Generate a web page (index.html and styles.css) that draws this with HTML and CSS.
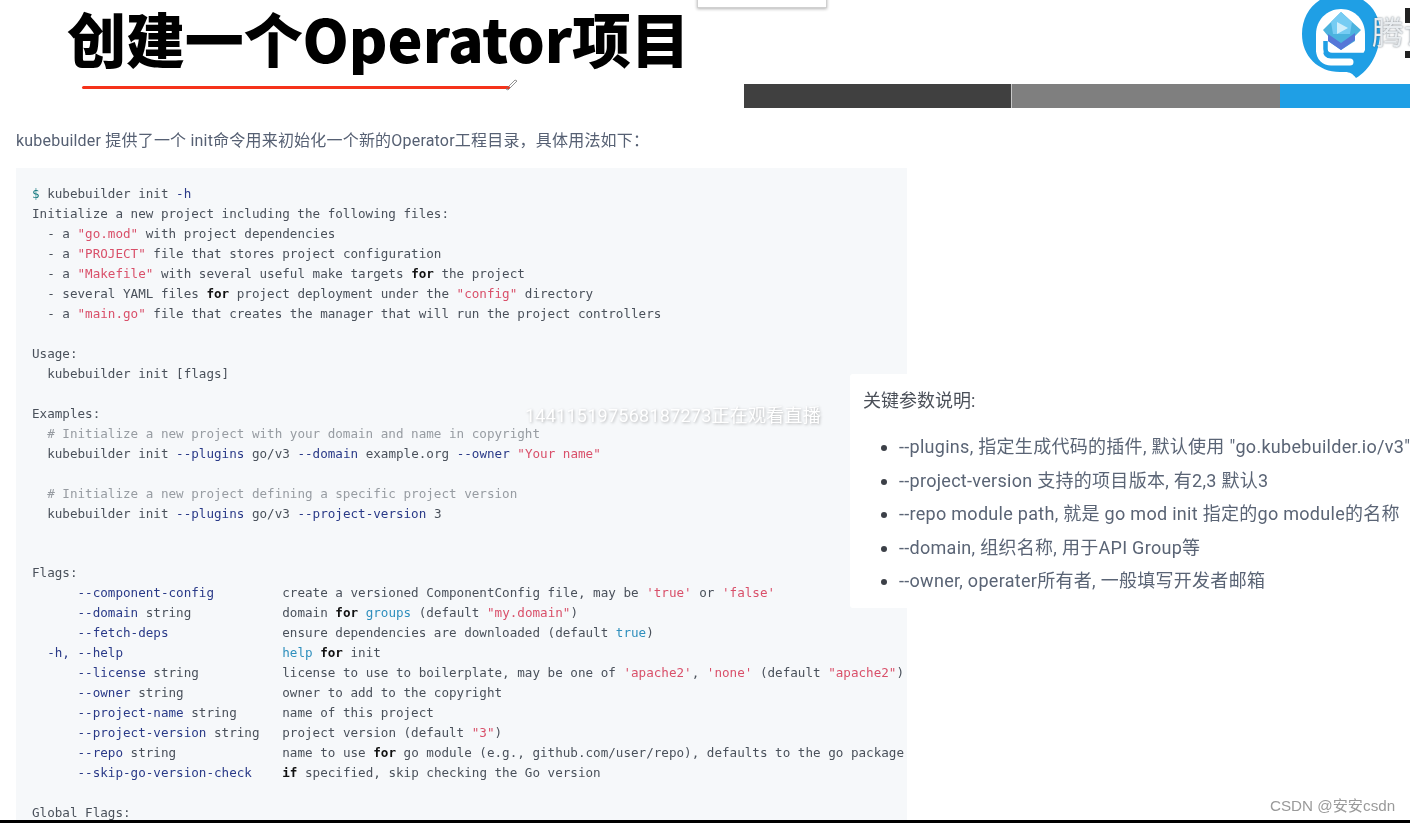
FILE: index.html
```html
<!DOCTYPE html>
<html lang="zh-CN">
<head>
<meta charset="utf-8">
<title>创建一个Operator项目</title>
<link rel="stylesheet" href="styles.css">
</head>
<body>
<div class="stage">
  <header class="slide-head">
    <div class="title-block">
      <h1 class="title">创建一个Operator项目</h1>
      <div class="rule"></div>
    </div>
    <div class="bars">
      <div class="bar bar-dark"></div>
      <div class="bar bar-mid"></div>
      <div class="bar bar-blue"></div>
    </div>
  </header>

  <p class="intro">kubebuilder 提供了一个 init命令用来初始化一个新的Operator工程目录，具体用法如下：</p>

  <pre class="code"><span class="p">$</span> kubebuilder init <span class="f">-h</span>
Initialize a new project including the following files:
  - a <span class="s">"go.mod"</span> with project dependencies
  - a <span class="s">"PROJECT"</span> file that stores project configuration
  - a <span class="s">"Makefile"</span> with several useful make targets <span class="k">for</span> the project
  - several YAML files <span class="k">for</span> project deployment under the <span class="s">"config"</span> directory
  - a <span class="s">"main.go"</span> file that creates the manager that will run the project controllers

Usage:
  kubebuilder init [flags]

Examples:
  <span class="c"># Initialize a new project with your domain and name in copyright</span>
  kubebuilder init <span class="f">--plugins</span> go/v3 <span class="f">--domain</span> example.org <span class="f">--owner</span> <span class="s">"Your name"</span>

  <span class="c"># Initialize a new project defining a specific project version</span>
  kubebuilder init <span class="f">--plugins</span> go/v3 <span class="f">--project-version</span> 3


Flags:
      <span class="f">--component-config</span>         create a versioned ComponentConfig file, may be <span class="s">'true'</span> or <span class="s">'false'</span>
      <span class="f">--domain</span> string            domain <span class="k">for</span> <span class="b">groups</span> (default <span class="s">"my.domain"</span>)
      <span class="f">--fetch-deps</span>               ensure dependencies are downloaded (default <span class="b">true</span>)
  <span class="f">-h, --help</span>                     <span class="b">help</span> <span class="k">for</span> init
      <span class="f">--license</span> string           license to use to boilerplate, may be one of <span class="s">'apache2'</span>, <span class="s">'none'</span> (default <span class="s">"apache2"</span>)
      <span class="f">--owner</span> string             owner to add to the copyright
      <span class="f">--project-name</span> string      name of this project
      <span class="f">--project-version</span> string   project version (default <span class="s">"3"</span>)
      <span class="f">--repo</span> string              name to use <span class="k">for</span> go module (e.g., github.com/user/repo), defaults to the go package
      <span class="f">--skip-go-version-check</span>    <span class="k">if</span> specified, skip checking the Go version

Global Flags:</pre>

  <div class="footer-edge"></div>

  <div class="popup"></div>

  <svg class="pencil" viewBox="0 0 14 14" aria-hidden="true">
    <path d="M1 12 L10 3 M3 13 L12 4 M10 3 L12 4 M1 12 L3 13" fill="none" stroke="#777" stroke-width=".8"/>
  </svg>

  <svg class="logo" viewBox="0 0 90 82" aria-hidden="true">
    <path d="M41 -6 C18 -6 2 12 2 34 C2 56 18 72 40 72 L45 72 C50 72 53 74 56 78 C70 70 80 52 80 32 C80 10 64 -6 41 -6 Z" fill="#1f9fe5"/>
    <path d="M41 9 C27 9 16 20 16 34 L16 52 L62 56 L65 50 L65 34 C65 20 55 9 41 9 Z" fill="#fff"/>
    <path d="M19.500 40 L19.500 50 C19.500 58 25 62 31 62 L50 62" fill="none" stroke="#fff" stroke-width="7" stroke-linecap="round"/>
    <path d="M25.500 41 L25.500 49 C25.500 53 28 55 32 55 L66 55" fill="none" stroke="#1f9fe5" stroke-width="4.500"/>
    <path d="M41 12 L61 30 L55 36 L55 41 L41 50 L28 41 L28 36 L23 30 Z" fill="#4bb3de"/>
    <path d="M41 12 L52 22 L50 34 L33 34 L31 22 Z" fill="#76ccf3"/>
    <path d="M28 34 L41 43 L55 33 L55 40 L41 50 L28 41 Z" fill="#5577d8"/>
    <path d="M37 22 L37 34 L48 28 Z" fill="#cfeefb"/>
  </svg>
  <div class="brand">腾讯</div>
  <div class="brand-edge"></div>

  <div class="viewers">144115197568187273正在观看直播</div>

  <section class="params">
    <h2 class="params-title">关键参数说明:</h2>
    <ul class="params-list">
      <li>--plugins, 指定生成代码的插件, 默认使用 "go.kubebuilder.io/v3"</li>
      <li>--project-version 支持的项目版本, 有2,3 默认3</li>
      <li>--repo module path, 就是 go mod init 指定的go module的名称</li>
      <li>--domain, 组织名称, 用于API Group等</li>
      <li>--owner, operater所有者, 一般填写开发者邮箱</li>
    </ul>
  </section>

  <div class="credit">CSDN @安安csdn</div>
</div>
</body>
</html>
```

FILE: styles.css
```css
* { box-sizing: border-box; }
html, body { margin: 0; padding: 0; background: #fff; }
body { width: 1410px; height: 823px; overflow: hidden; }

.stage {
  position: relative;
  width: 1410px;
  height: 823px;
  overflow: hidden;
  display: flex;
  flex-direction: column;
  background: #fff;
  font-family: Roboto, "Noto Sans CJK SC", sans-serif;
  filter: blur(0.45px);
}

.slide-head {
  flex: none;
  height: 108px;
  display: flex;
  justify-content: space-between;
}
.title-block { padding-left: 67px; }
.title {
  margin: 0;
  font-family: "Noto Sans CJK SC", sans-serif;
  font-size: 59px;
  font-weight: 900;
  line-height: 76px;
  letter-spacing: -0.1px;
  color: #000;
  white-space: nowrap;
}
.rule {
  width: 428px;
  height: 3px;
  margin: 10px 0 0 15px;
  background: #f5321a;
  border-radius: 2px;
}
.bars {
  align-self: flex-end;
  display: flex;
  width: 666px;
  height: 24px;
}
.bar { height: 100%; }
.bar-dark { width: 268px; background: #404040; border-right: 1px solid #c8c8c8; }
.bar-mid { width: 268px; background: #7f7f7f; }
.bar-blue { flex: 1; background: #1f9fe5; }

.intro {
  flex: none;
  margin: 21px 0 15px 16px;
  font-size: 16px;
  line-height: 24px;
  letter-spacing: 0.2px;
  color: #566073;
  white-space: nowrap;
}

.code {
  flex: 1;
  min-height: 0;
  width: 891px;
  margin: 0 0 0 16px;
  padding: 16px;
  overflow: hidden;
  background: #f6f8fa;
  font-family: "DejaVu Sans Mono", monospace;
  font-size: 12.6px;
  line-height: 19.97px;
  color: #4a515b;
}
.s { color: #d9506a; }
.k { color: #111; font-weight: 700; }
.f { color: #2a3a88; }
.b { color: #2f8fbd; }
.c { color: #979ca2; }
.p { color: #167a80; }

.footer-edge { flex: none; height: 3px; background: #000; }

.popup {
  position: absolute;
  left: 697px;
  top: -4px;
  width: 130px;
  height: 12px;
  background: #fff;
  border: 1px solid #d0d0d0;
  box-shadow: 0 1px 3px rgba(0, 0, 0, .3);
}
.pencil { position: absolute; left: 505px; top: 77px; width: 14px; height: 14px; }
.logo { position: absolute; left: 1300px; top: 0; width: 90px; height: 82px; }
.brand {
  position: absolute;
  left: 1372px;
  top: 14px;
  font-size: 32px;
  line-height: 38px;
  white-space: nowrap;
  color: #e8ecef;
  text-shadow: 0 0 2px rgba(70, 80, 90, .8);
}
.brand-edge {
  position: absolute;
  right: 0;
  top: 8px;
  width: 5px;
  height: 50px;
  background: linear-gradient(#222 0 30%, transparent 30% 86%, #222 86% 100%);
}
.viewers {
  position: absolute;
  left: 525px;
  top: 404px;
  font-size: 18px;
  line-height: 24px;
  letter-spacing: 0.25px;
  color: #fff;
  white-space: nowrap;
  text-shadow: 1px 1px 3px rgba(0, 0, 0, .28);
}
.params {
  position: absolute;
  left: 850px;
  top: 374px;
  width: 560px;
  height: 234px;
  padding: 14px 0 0 13px;
  background: #fff;
  border-radius: 3px;
  color: #5a6475;
}
.params-title {
  margin: 0;
  font-size: 18px;
  font-weight: 400;
  line-height: 26px;
  color: #4a4f58;
}
.params-list {
  margin: 16px 0 0;
  padding: 0 0 0 36px;
  font-size: 18px;
  line-height: 33.5px;
  letter-spacing: 0.29px;
  white-space: nowrap;
}
.params-list li::marker { color: #3c4048; }
.credit {
  position: absolute;
  left: 1270px;
  top: 796px;
  font-family: "Liberation Sans", "Noto Sans CJK SC", sans-serif;
  font-size: 15.2px;
  line-height: 20px;
  color: #9a9a9a;
  white-space: nowrap;
}
```
